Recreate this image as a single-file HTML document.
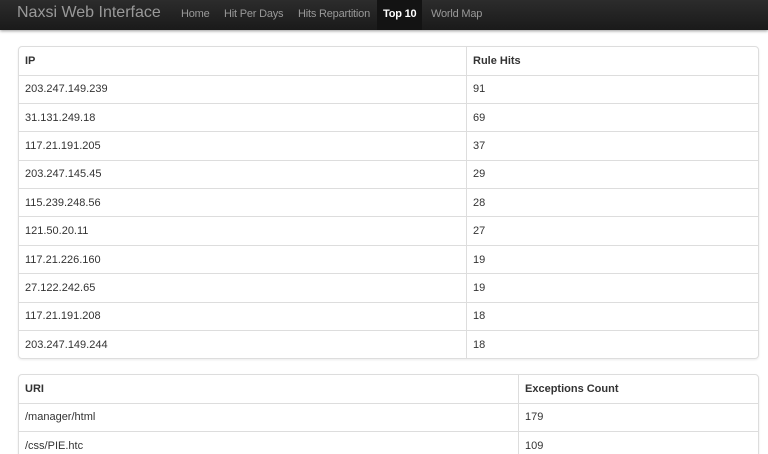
<!DOCTYPE html>
<html><head><meta charset="utf-8"><style>
*{margin:0;padding:0;box-sizing:border-box}
html,body{width:768px;height:454px;overflow:hidden}
body{background:#fff;font-family:"Liberation Sans",Arial,sans-serif;color:#333;font-size:11px;position:relative}
.nav{position:absolute;left:0;top:0;width:768px;height:30px;background:linear-gradient(#2c2c2c,#1a1a1a);box-shadow:0 1px 3px rgba(0,0,0,.4)}
.brand{position:absolute;left:17px;top:4px;font-size:16px;color:#999}
.nav a{position:absolute;top:0;height:30px;line-height:29px;font-size:11px;color:#999;padding:0 7px;letter-spacing:-0.2px}
.nav a.act{background:#131313;color:#fff;font-weight:bold;padding:0 6px}
table{position:absolute;border-collapse:separate;border-spacing:0;border:1px solid #ddd;border-radius:4px;box-shadow:0 1px 2px rgba(0,0,0,.08);table-layout:fixed}
td,th{height:28.4px;padding:0 6px;text-align:left;border-top:1px solid #ddd;vertical-align:middle;font-size:11px;white-space:nowrap}
tr:first-child th{border-top:0;font-weight:bold;height:27.5px}
td+td,th+th{border-left:1px solid #ddd}
</style></head><body>
<div class="nav">
<div class="brand">Naxsi Web Interface</div>
<a style="left:174px">Home</a>
<a style="left:217px">Hit Per Days</a>
<a style="left:291px">Hits Repartition</a>
<a class="act" style="left:377px">Top 10</a>
<a style="left:424px">World Map</a>
</div>
<table style="left:18px;top:46px;width:741px">
<tr><th style="width:447px">IP</th><th>Rule Hits</th></tr>
<tr><td>203.247.149.239</td><td>91</td></tr>
<tr><td>31.131.249.18</td><td>69</td></tr>
<tr><td>117.21.191.205</td><td>37</td></tr>
<tr><td>203.247.145.45</td><td>29</td></tr>
<tr><td>115.239.248.56</td><td>28</td></tr>
<tr><td>121.50.20.11</td><td>27</td></tr>
<tr><td>117.21.226.160</td><td>19</td></tr>
<tr><td>27.122.242.65</td><td>19</td></tr>
<tr><td>117.21.191.208</td><td>18</td></tr>
<tr><td>203.247.149.244</td><td>18</td></tr>
</table>
<table style="left:18px;top:374px;width:741px">
<tr><th style="width:499px">URI</th><th>Exceptions Count</th></tr>
<tr><td>/manager/html</td><td>179</td></tr>
<tr><td>/css/PIE.htc</td><td>109</td></tr>
</table>
</body></html>
